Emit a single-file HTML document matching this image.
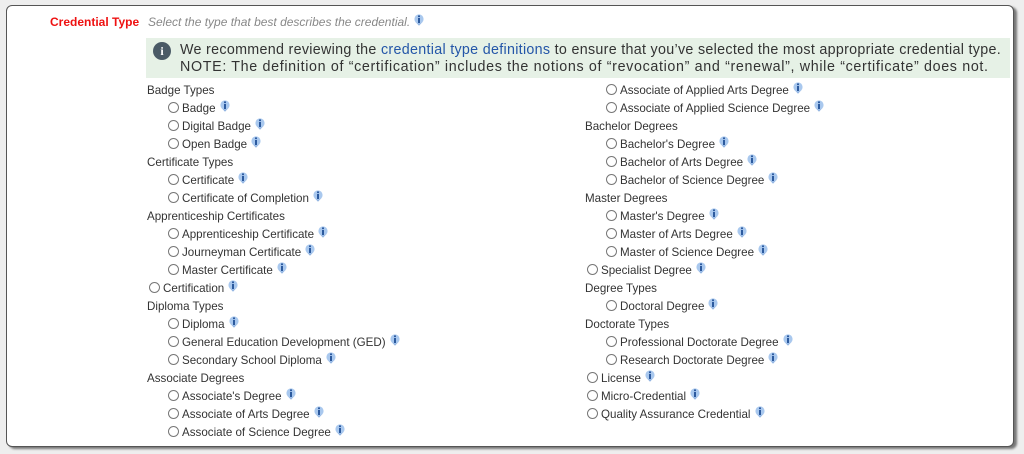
<!DOCTYPE html>
<html><head><meta charset="utf-8"><style>
body{margin:0;width:1024px;height:454px;background:#eeeeee;font-family:"Liberation Sans",sans-serif;position:relative;overflow:hidden}
.card{position:absolute;left:6px;top:5px;width:1006px;height:440px;background:#fff;border:1px solid #555;border-radius:6px;box-shadow:3px 2px 2px #777}
.t{position:absolute;font-size:11.6px;color:#333;white-space:nowrap;line-height:18px}
.r{display:inline-block;width:9px;height:9px;border:1px solid #777;border-radius:50%;margin-right:3px;vertical-align:-1px}
.i{display:inline-block;width:12px;height:12px;margin-left:3px;vertical-align:0px}
</style></head><body>
<svg width="0" height="0" style="position:absolute"><defs>
<symbol id="ic" viewBox="0 0 12 12"><path d="M2.5 8 L6 11.8 L9.5 8 Z" fill="#8fb2e0"/><circle cx="6" cy="5" r="4.6" fill="#a9c8ee"/><circle cx="6" cy="2.3" r="1" fill="#1f4e96"/><rect x="5.1" y="4" width="1.8" height="5" fill="#1f4e96"/></symbol>
</defs></svg>
<div class="card"></div>
<div class="t" style="left:50px;top:13px;color:#ee1111;font-weight:bold;font-size:12px">Credential Type</div>
<div class="t" style="left:148px;top:13px;color:#888;font-style:italic;font-size:12px">Select the type that best describes the credential.<svg class="i"><use href="#ic"/></svg></div>
<div style="position:absolute;left:146px;top:38px;width:864px;height:40px;background:#e6f1e6"></div>
<div style="position:absolute;left:153px;top:42px;width:18px;height:18px;border-radius:50%;background:#4a5a66;color:#fff;font:bold 12px 'Liberation Serif',serif;text-align:center;line-height:18px">i</div>
<div class="t" style="left:180px;top:42px;line-height:17px;font-size:14.3px"><span style="letter-spacing:0.3px">We recommend reviewing the <span style="color:#2456a8">credential type definitions</span> to ensure that you’ve selected the most appropriate credential type.</span><br><span style="letter-spacing:0.65px">NOTE: The definition of “certification” includes the notions of “revocation” and “renewal”, while “certificate” does not.</span></div>
<div id="L"></div>
<script>
var L=[[0,"Badge Types"],[1,"Badge"],[1,"Digital Badge"],[1,"Open Badge"],[0,"Certificate Types"],[1,"Certificate"],[1,"Certificate of Completion"],[0,"Apprenticeship Certificates"],[1,"Apprenticeship Certificate"],[1,"Journeyman Certificate"],[1,"Master Certificate"],[2,"Certification"],[0,"Diploma Types"],[1,"Diploma"],[1,"General Education Development (GED)"],[1,"Secondary School Diploma"],[0,"Associate Degrees"],[1,"Associate's Degree"],[1,"Associate of Arts Degree"],[1,"Associate of Science Degree"]];
var R=[[1,"Associate of Applied Arts Degree"],[1,"Associate of Applied Science Degree"],[0,"Bachelor Degrees"],[1,"Bachelor's Degree"],[1,"Bachelor of Arts Degree"],[1,"Bachelor of Science Degree"],[0,"Master Degrees"],[1,"Master's Degree"],[1,"Master of Arts Degree"],[1,"Master of Science Degree"],[2,"Specialist Degree"],[0,"Degree Types"],[1,"Doctoral Degree"],[0,"Doctorate Types"],[1,"Professional Doctorate Degree"],[1,"Research Doctorate Degree"],[2,"License"],[2,"Micro-Credential"],[2,"Quality Assurance Credential"]];
var h="";
function col(a,x){a.forEach(function(e,k){var y=82+k*18;var lx=e[0]==0?x:(e[0]==1?x+21:x+2);
h+='<div class="t" style="left:'+lx+'px;top:'+y+'px">'+(e[0]?'<span class="r"></span>'+e[1]+'<svg class="i"><use href="#ic"/></svg>':e[1])+'</div>';});}
col(L,147);col(R,585);
document.getElementById("L").innerHTML=h;
</script>
</body></html>
